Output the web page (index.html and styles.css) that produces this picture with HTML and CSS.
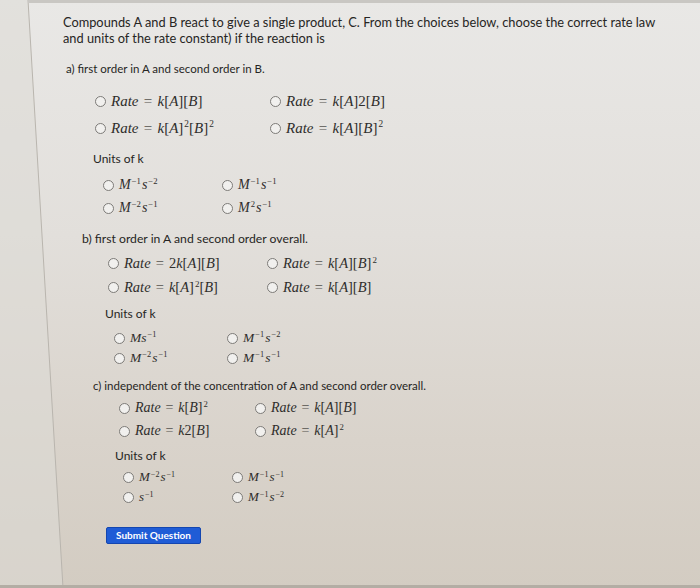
FILE: index.html
```html
<!DOCTYPE html>
<html lang="en">
<head>
<meta charset="utf-8">
<title>Rate law question</title>
<link rel="stylesheet" href="styles.css">
</head>
<body>
<div class="page">
  <p class="intro">Compounds A and B react to give a single product, C. From the choices below, choose the correct rate law and units of the rate constant) if the reaction is</p>

  <section class="part part-a">
    <p class="prompt">a) first order in A and second order in B.</p>
    <div class="choices rates">
      <label class="opt"><span class="radio"></span><span class="m"><i>Rate</i><span class="eq">=</span><i>k</i>[<i>A</i>][<i>B</i>]</span></label>
      <label class="opt"><span class="radio"></span><span class="m"><i>Rate</i><span class="eq">=</span><i>k</i>[<i>A</i>]2[<i>B</i>]</span></label>
      <label class="opt"><span class="radio"></span><span class="m"><i>Rate</i><span class="eq">=</span><i>k</i>[<i>A</i>]<sup>2</sup>[<i>B</i>]<sup>2</sup></span></label>
      <label class="opt"><span class="radio"></span><span class="m"><i>Rate</i><span class="eq">=</span><i>k</i>[<i>A</i>][<i>B</i>]<sup>2</sup></span></label>
    </div>
    <p class="units-label">Units of k</p>
    <div class="choices units">
      <label class="opt"><span class="radio"></span><span class="m"><i>M</i><sup>−1</sup><i>s</i><sup>−2</sup></span></label>
      <label class="opt"><span class="radio"></span><span class="m"><i>M</i><sup>−1</sup><i>s</i><sup>−1</sup></span></label>
      <label class="opt"><span class="radio"></span><span class="m"><i>M</i><sup>−2</sup><i>s</i><sup>−1</sup></span></label>
      <label class="opt"><span class="radio"></span><span class="m"><i>M</i><sup>2</sup><i>s</i><sup>−1</sup></span></label>
    </div>
  </section>

  <section class="part part-b">
    <p class="prompt">b) first order in A and second order overall.</p>
    <div class="choices rates">
      <label class="opt"><span class="radio"></span><span class="m"><i>Rate</i><span class="eq">=</span>2<i>k</i>[<i>A</i>][<i>B</i>]</span></label>
      <label class="opt"><span class="radio"></span><span class="m"><i>Rate</i><span class="eq">=</span><i>k</i>[<i>A</i>][<i>B</i>]<sup>2</sup></span></label>
      <label class="opt"><span class="radio"></span><span class="m"><i>Rate</i><span class="eq">=</span><i>k</i>[<i>A</i>]<sup>2</sup>[<i>B</i>]</span></label>
      <label class="opt"><span class="radio"></span><span class="m"><i>Rate</i><span class="eq">=</span><i>k</i>[<i>A</i>][<i>B</i>]</span></label>
    </div>
    <p class="units-label">Units of k</p>
    <div class="choices units">
      <label class="opt"><span class="radio"></span><span class="m"><i>Ms</i><sup>−1</sup></span></label>
      <label class="opt"><span class="radio"></span><span class="m"><i>M</i><sup>−1</sup><i>s</i><sup>−2</sup></span></label>
      <label class="opt"><span class="radio"></span><span class="m"><i>M</i><sup>−2</sup><i>s</i><sup>−1</sup></span></label>
      <label class="opt"><span class="radio"></span><span class="m"><i>M</i><sup>−1</sup><i>s</i><sup>−1</sup></span></label>
    </div>
  </section>

  <section class="part part-c">
    <p class="prompt">c) independent of the concentration of A and second order overall.</p>
    <div class="choices rates">
      <label class="opt"><span class="radio"></span><span class="m"><i>Rate</i><span class="eq">=</span><i>k</i>[<i>B</i>]<sup>2</sup></span></label>
      <label class="opt"><span class="radio"></span><span class="m"><i>Rate</i><span class="eq">=</span><i>k</i>[<i>A</i>][<i>B</i>]</span></label>
      <label class="opt"><span class="radio"></span><span class="m"><i>Rate</i><span class="eq">=</span><i>k</i>2[<i>B</i>]</span></label>
      <label class="opt"><span class="radio"></span><span class="m"><i>Rate</i><span class="eq">=</span><i>k</i>[<i>A</i>]<sup>2</sup></span></label>
    </div>
    <p class="units-label">Units of k</p>
    <div class="choices units">
      <label class="opt"><span class="radio"></span><span class="m"><i>M</i><sup>−2</sup><i>s</i><sup>−1</sup></span></label>
      <label class="opt"><span class="radio"></span><span class="m"><i>M</i><sup>−1</sup><i>s</i><sup>−1</sup></span></label>
      <label class="opt"><span class="radio"></span><span class="m"><i>s</i><sup>−1</sup></span></label>
      <label class="opt"><span class="radio"></span><span class="m"><i>M</i><sup>−1</sup><i>s</i><sup>−2</sup></span></label>
    </div>
  </section>

  <button class="submit" type="button">Submit Question</button>

  <svg class="frame" width="700" height="588" viewBox="0 0 700 588" aria-hidden="true">
    <polygon points="0,0 28,0 63,588 0,588" fill="#dcdad6" opacity="0.55"/>
    <line x1="28" y1="0" x2="63" y2="588" stroke="#b9b5ae" stroke-width="1"/>
    <line x1="28" y1="1.5" x2="700" y2="1.5" stroke="#c9c7c3" stroke-width="3"/>
    <line x1="0" y1="586.5" x2="700" y2="586.5" stroke="#b3ada4" stroke-width="3"/>
  </svg>
</div>
</body>
</html>
```

FILE: styles.css
```css
html, body {
  margin: 0;
  padding: 0;
}

body {
  width: 700px;
  height: 588px;
  overflow: hidden;
  background: linear-gradient(180deg, #e9e8e6 0%, #e2dfdb 40%, #d9d3cb 75%, #d3ccc2 100%);
  color: #262523;
  font-family: Lato, "Open Sans", "Liberation Sans", sans-serif;
}

.page {
  position: relative;
  width: 700px;
  height: 588px;
  padding: 14px 0 0 63px;
  box-sizing: border-box;
}

.frame {
  position: absolute;
  left: 0;
  top: 0;
  pointer-events: none;
}

p {
  margin: 0;
}

.intro {
  font-size: 12.8px;
  line-height: 16px;
  width: 610px;
}

.prompt,
.units-label {
  font-size: 12px;
  line-height: 16px;
}

.choices {
  display: grid;
}

.opt {
  display: flex;
  align-items: center;
  white-space: nowrap;
}

.radio {
  flex: none;
  width: 9px;
  height: 9px;
  border: 1px solid #7d7b78;
  border-radius: 50%;
  background: #f1f0ee;
  margin-right: 5px;
}

.m {
  font-family: "Liberation Serif", "DejaVu Serif", serif;
  color: #2f2e2c;
}

.m i {
  font-style: italic;
}

.m .eq {
  margin: 0 0.35em;
  color: #55534f;
}

.m sup {
  font-size: 0.62em;
  line-height: 0;
  vertical-align: 0.55em;
  margin-left: 1px;
}

.units .m sup {
  margin-right: 1px;
}

/* Part a */
.part-a .prompt { margin: 15px 0 0 3px; font-size: 11.5px; }
.part-a .rates {
  margin: 14px 0 0 32px;
  grid-template-columns: 175px auto;
  grid-auto-rows: 20px;
  row-gap: 7px;
}
.part-a .rates .m { font-size: 15px; }
.part-a .units-label { margin: 13px 0 0 30px; }
.part-a .units {
  margin: 9px 0 0 40px;
  grid-template-columns: 119px auto;
  grid-auto-rows: 18px;
  row-gap: 5px;
}
.part-a .units .m { font-size: 14px; }

/* Part b */
.part-b .prompt { margin: 14px 0 0 19px; font-size: 12.2px; }
.part-b .rates {
  margin: 6px 0 0 45px;
  grid-template-columns: 159px auto;
  grid-auto-rows: 20px;
  row-gap: 4px;
}
.part-b .rates .m { font-size: 14.5px; }
.part-b .units-label { margin: 9px 0 0 42px; }
.part-b .units {
  margin: 7px 0 0 51px;
  grid-template-columns: 113px auto;
  grid-auto-rows: 18px;
  row-gap: 2px;
}
.part-b .units .m { font-size: 13.5px; }

/* Part c */
.part-c .prompt { margin: 11px 0 0 30px; font-size: 11.5px; }
.part-c .rates {
  margin: 4px 0 0 56px;
  grid-template-columns: 136px auto;
  grid-auto-rows: 20px;
  row-gap: 3px;
}
.part-c .rates .m { font-size: 14px; }
.part-c .units-label { margin: 7px 0 0 52px; }
.part-c .units {
  margin: 4px 0 0 60px;
  grid-template-columns: 109px auto;
  grid-auto-rows: 18px;
  row-gap: 2px;
}
.part-c .units .m { font-size: 13px; }

.submit {
  display: block;
  margin: 21px 0 0 43px;
  width: 95px;
  height: 17px;
  padding: 0;
  border: 1px solid #1446b0;
  border-radius: 2px;
  background: #1f5cd6;
  color: #ffffff;
  font-family: Lato, "Open Sans", "Liberation Sans", sans-serif;
  font-weight: 700;
  font-size: 10px;
  line-height: 15px;
  text-align: center;
}
```
